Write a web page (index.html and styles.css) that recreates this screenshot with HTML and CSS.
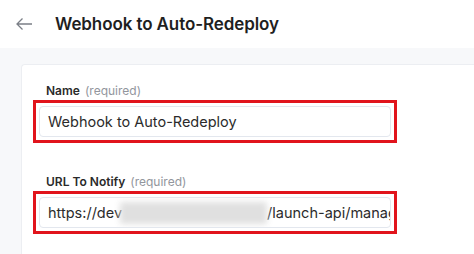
FILE: index.html
```html
<!DOCTYPE html>
<html lang="en">
<head>
  <meta charset="UTF-8">
  <title>Webhook to Auto-Redeploy</title>
  <link rel="stylesheet" href="styles.css">
</head>
<body>
<div class="page-header">
  <svg class="back" width="18" height="14" viewBox="0 0 18 14">
    <path d="M17 7H2M7.5 1.5L2 7l5.5 5.5" fill="none" stroke="#7b7f87" stroke-width="1.3"/>
  </svg>
  <h1 class="title">Webhook to Auto-Redeploy</h1>
</div>

<div class="content">
  <div class="card">
    <!-- Name field -->
    <div class="field">
      <div class="label">Name <span class="hint">(required)</span></div>
      <div class="highlight-box">
        <div class="input">Webhook to Auto-Redeploy</div>
      </div>
    </div>

    <!-- URL field -->
    <div class="field">
      <div class="label">URL To Notify <span class="hint">(required)</span></div>
      <div class="highlight-box">
        <div class="input">https://dev<span class="blur"></span>/launch-api/manage-webhooks</div>
      </div>
    </div>
  </div>
</div>
</body>
</html>
```

FILE: styles.css
```css
body {
  margin: 0;
  font-family: Inter, "Noto Sans", sans-serif;
  background: #fff;
  color: #222;
  height: 254px;
  overflow: hidden;
}
.page-header {
  height: 48px;
  display: flex;
  align-items: center;
  padding-left: 15px;
  background: #fff;
}
.back {
  margin-right: 22px;
}
.title {
  margin: 0;
  font-size: 17px;
  font-weight: 600;
  color: #1f1f1f;
  letter-spacing: -0.1px;
}
.content {
  background: #f7f8fa;
  padding: 16px 0 0 21px;
  height: 190px;
}
.card {
  background: #fff;
  border-top: 1px solid #eceef2;
  border-left: 1px solid #eceef2;
  border-top-left-radius: 4px;
  padding: 17px 0 0 11px;
  height: 172px;
}
.field {
  width: 364px;
  margin-bottom: 30px;
}
.label {
  font-size: 12px;
  font-weight: 600;
  line-height: 18px;
  color: #2a2a2a;
  padding-left: 13px;
}
.hint {
  font-weight: 400;
  color: #92969d;
  margin-left: 2px;
}
.highlight-box {
  border: 3px solid #e1141c;
  padding: 3px;
}
.input {
  height: 29px;
  border: 1px solid #e3e7ee;
  border-radius: 4px;
  padding: 0 8px;
  display: flex;
  align-items: center;
  font-size: 14.5px;
  color: #2b2b2b;
  white-space: nowrap;
  overflow: hidden;
}
.blur {
  display: inline-block;
  width: 147px;
  height: 22px;
  margin-left: -2px;
  background: #e0e0e0;
  filter: blur(3px);
  flex-shrink: 0;
}
```
